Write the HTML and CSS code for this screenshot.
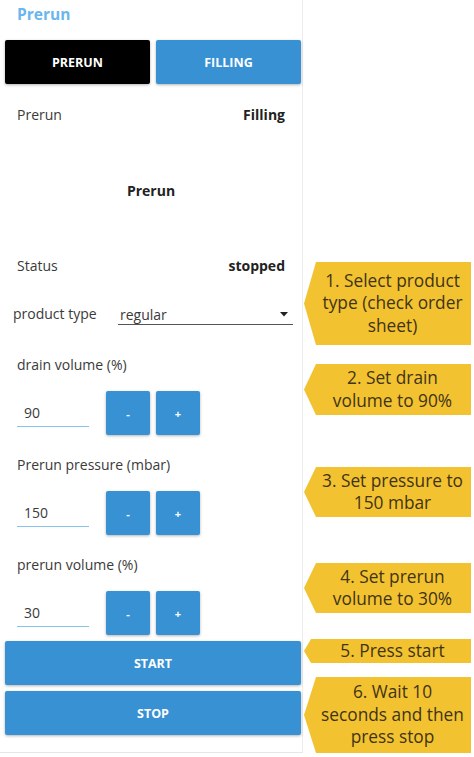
FILE: index.html
```html
<!DOCTYPE html>
<html>
<head>
<meta charset="utf-8">
<link rel="stylesheet" href="styles.css">
</head>
<body>
<div class="page">
  <div class="panel">
    <div class="title">Prerun</div>
    <div class="tabs">
      <button class="tab tab-active">PRERUN</button>
      <button class="tab">FILLING</button>
    </div>
    <div class="row row-info"><span>Prerun</span><b>Filling</b></div>
    <div class="center-title">Prerun</div>
    <div class="row row-status"><span>Status</span><b>stopped</b></div>
    <div class="product">
      <span class="product-label">product type</span>
      <div class="select"><span>regular</span><svg class="caret" width="8" height="5" viewBox="0 0 8 5"><path d="M0 0H8L4 4.5Z" fill="#222"/></svg></div>
    </div>
    <div class="group">
      <div class="label">drain volume (%)</div>
      <div class="controls">
        <div class="input">90</div>
        <button class="step">-</button>
        <button class="step">+</button>
      </div>
    </div>
    <div class="group">
      <div class="label">Prerun pressure (mbar)</div>
      <div class="controls">
        <div class="input">150</div>
        <button class="step">-</button>
        <button class="step">+</button>
      </div>
    </div>
    <div class="group">
      <div class="label">prerun volume (%)</div>
      <div class="controls">
        <div class="input">30</div>
        <button class="step">-</button>
        <button class="step">+</button>
      </div>
    </div>
    <button class="wide wide-start">START</button>
    <button class="wide">STOP</button>
  </div>

  <div class="callout c1">1. Select product<br>type (check order<br>sheet)</div>
  <div class="callout c2">2. Set drain<br>volume to 90%</div>
  <div class="callout c3">3. Set pressure to<br>150 mbar</div>
  <div class="callout c4">4. Set prerun<br>volume to 30%</div>
  <div class="callout c5">5. Press start</div>
  <div class="callout c6">6. Wait 10<br>seconds and then<br>press stop</div>
</div>
</body>
</html>
```

FILE: styles.css
```css
* { box-sizing: border-box; }
html, body { margin: 0; padding: 0; background: #fff; }
body { font-family: "Open Sans", "Noto Sans", sans-serif; color: #3a3a3a; }

.page { position: relative; width: 474px; height: 757px; }

.panel {
  width: 303px;
  height: 753px;
  border-right: 1px solid #ececec;
  border-bottom: 1px solid #e6e6e6;
  display: flex;
  flex-direction: column;
  font-size: 14px;
}

.title {
  height: 40px;
  padding: 3px 0 0 17px;
  line-height: 22px;
  font-size: 15.5px;
  font-weight: 700;
  color: #6ab6ef;
}

.tabs { display: flex; gap: 6px; padding-left: 5px; height: 44px; }
.tab, .step, .wide {
  border: none;
  border-radius: 2px;
  background: #3791d2;
  color: #fff;
  font-family: "Open Sans", "Noto Sans", sans-serif;
  font-weight: 700;
  box-shadow: 0 1px 3px rgba(0,0,0,0.3);
  padding: 0;
}
.tab { width: 145px; height: 44px; font-size: 12.5px; }
.tab-active { background: #000; }

.row {
  display: flex;
  justify-content: space-between;
  align-items: center;
  padding: 0 17px;
}
.row b { font-weight: 700; color: #222; }
.row-info { height: 60px; }
.center-title {
  height: 92px;
  display: flex;
  align-items: center;
  justify-content: center;
  font-weight: 700;
  color: #222;
}
.row-status { height: 58px; }

.product {
  height: 38px;
  display: flex;
  align-items: center;
  padding-left: 13px;
}
.product-label { width: 105px; }
.select {
  width: 175px;
  height: 24px;
  border-bottom: 1px solid #555;
  display: flex;
  align-items: center;
  justify-content: space-between;
  padding: 3px 5px 0 2px;
}

.group { margin-top: 23px; padding-left: 17px; }
.group + .group { margin-top: 20px; }
.label { height: 20px; line-height: 20px; }
.controls { display: flex; align-items: center; margin-top: 16px; height: 44px; }
.input {
  width: 72px;
  height: 24px;
  margin-top: 3px;
  padding-left: 7px;
  line-height: 20px;
  border-bottom: 1px solid #86c2ea;
  margin-right: 17px;
}
.step { width: 44px; height: 44px; font-size: 11px; margin-right: 6px; }

.wide { margin-left: 5px; width: 296px; height: 44px; font-size: 12.5px; }
.wide-start { margin-top: 6px; margin-bottom: 6px; }

.callout {
  position: absolute;
  left: 304px;
  width: 167px;
  background: #f3c230;
  color: #3f3416;
  font-size: 17.3px;
  line-height: 22.5px;
  text-align: center;
  padding-left: 10px;
  display: flex;
  align-items: center;
  justify-content: center;
  white-space: nowrap;
  clip-path: polygon(12px 0, 100% 0, 100% 100%, 12px 100%, 0 50%);
}
.c1 { top: 262px; height: 83px; }
.c2 { top: 364px; height: 51px; }
.c3 { top: 467px; height: 50px; }
.c4 { top: 563px; height: 50px; }
.c5 { top: 639px; height: 24px; clip-path: polygon(7px 0, 100% 0, 100% 100%, 7px 100%, 0 50%); }
.c6 { top: 677px; height: 76px; }
```
